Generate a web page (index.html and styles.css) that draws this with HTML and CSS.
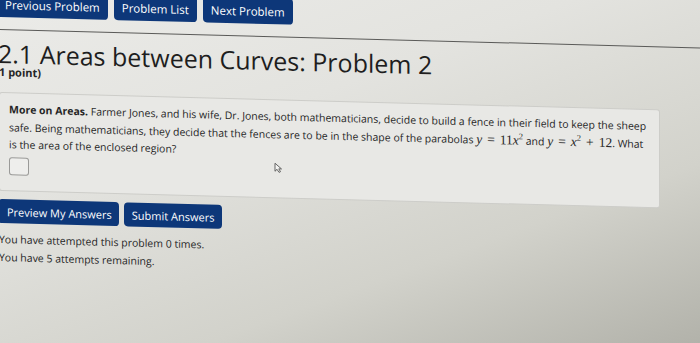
FILE: index.html
```html
<!DOCTYPE html>
<html>
<head>
<meta charset="utf-8">
<link rel="stylesheet" href="styles.css">
</head>
<body>
<div class="page">
  <nav class="nav">
    <span class="btn btn-prev">Previous Problem</span>
    <span class="btn btn-list">Problem List</span>
    <span class="btn btn-next">Next Problem</span>
  </nav>
  <div class="rule"></div>
  <h1 class="title">2.1 Areas between Curves: Problem 2</h1>
  <div class="points">1 point)</div>
  <div class="problem">
    <p class="text"><b>More on Areas.</b> Farmer Jones, and his wife, Dr. Jones, both mathematicians, decide to build a fence in their field to keep the sheep safe. Being mathematicians, they decide that the fences are to be in the shape of the parabolas <span class="math"><i>y</i><span class="op">=</span>11<i>x</i><sup>2</sup></span> and <span class="math"><i>y</i><span class="op">=</span><i>x</i><sup>2</sup><span class="op">+</span>12</span>. What is the area of the enclosed region?</p>
    <div class="answer-row">
      <span class="answer"></span>
    </div>
    <svg class="cursor" width="9" height="11" viewBox="0 0 9 11"><path d="M1 1 L1 9 L3 7 L5 10 L6.5 9.3 L4.8 6.5 L7.5 6.5 Z" fill="#f4f4f2" stroke="#555" stroke-width="0.9" stroke-linejoin="round"/></svg>
  </div>
  <div class="actions">
    <span class="btn btn-preview">Preview My Answers</span>
    <span class="btn btn-submit">Submit Answers</span>
  </div>
  <p class="attempts">You have attempted this problem 0 times.<br>You have 5 attempts remaining.</p>
</div>
</body>
</html>
```
FILE: styles.css
```css
html, body {
  margin: 0;
  padding: 0;
  height: 100%;
  overflow: hidden;
}
body {
  background: linear-gradient(160deg, #ebebe8 0%, #e3e3df 35%, #d2d2cb 70%, #b2b2aa 100%);
  font-family: "Open Sans", "Noto Sans", sans-serif;
  color: #262626;
}
.page {
  transform: skewY(1.5deg);
  transform-origin: 0 0;
  margin-left: -2px;
  width: 720px;
}
.nav {
  display: flex;
  gap: 6px;
  margin-top: -9px;
  margin-left: -1px;
}
.btn {
  display: inline-flex;
  align-items: center;
  background: #0d3779;
  color: #fff;
  font-size: 11.5px;
  border-radius: 4px;
  padding: 0 8px;
  height: 26px;
  box-sizing: border-box;
}
.rule {
  height: 1px;
  background: #5a5a58;
  margin-top: 12px;
  width: 720px;
}
.title {
  font-weight: 400;
  font-size: 25px;
  line-height: 30px;
  margin: 8px 0 0 0;
  color: #1e1e1e;
}
.points {
  font-size: 11px;
  font-weight: 700;
  line-height: 14px;
  margin-top: -3px;
  margin-left: 1px;
}
.problem {
  position: relative;
  margin-top: 13px;
  margin-left: 1px;
  width: 661px;
  background: #e8e8e5;
  border: 1px solid #cdcdc9;
  border-radius: 3px;
  padding: 8px 8px 15px 9px;
  box-sizing: border-box;
}
.text {
  margin: 0;
  font-size: 10.5px;
  line-height: 17px;
}
.text b { font-weight: 700; }
.math {
  font-family: "Liberation Serif", serif;
  font-size: 13.5px;
}
.math .op {
  margin: 0 5px;
}
.math sup {
  font-size: 8.5px;
  line-height: 0;
}
.answer-row {
  margin-top: 4px;
  display: flex;
}
.answer {
  width: 18px;
  height: 16px;
  border: 1px solid #9a9a98;
  border-radius: 3px;
  background: #eeeeec;
}
.cursor {
  position: absolute;
  left: 274px;
  top: 62px;
}
.actions {
  display: flex;
  gap: 5px;
  margin-top: 8px;
}
.btn-preview { font-size: 11px; padding: 0 7px 0 9px; height: 24px; }
.btn-submit { font-size: 11px; height: 24px; padding: 0 8px; }
.attempts {
  margin: 7px 0 0 1px;
  font-size: 10.5px;
  line-height: 18px;
}
```
